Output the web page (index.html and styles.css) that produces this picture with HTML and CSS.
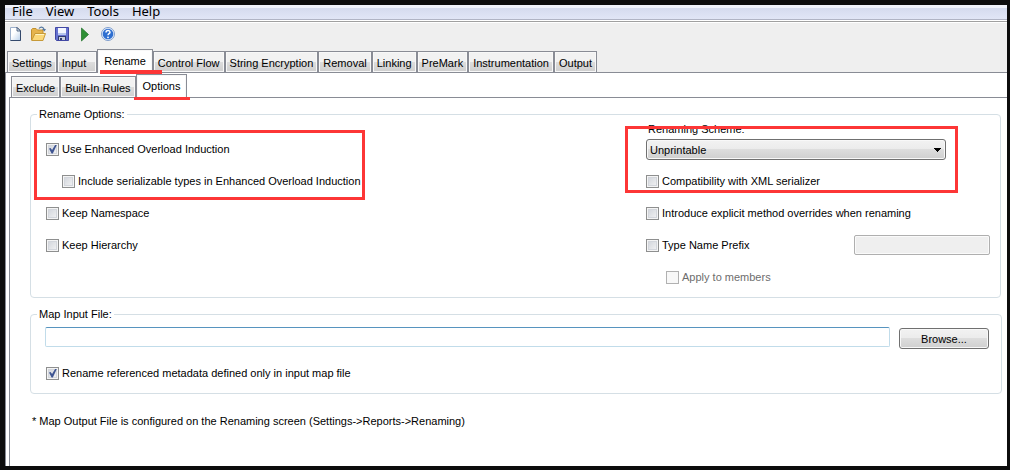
FILE: index.html
```html
<!DOCTYPE html>
<html lang="en">
<head>
  <meta charset="UTF-8">
  <meta name="viewport" content="width=device-width, initial-scale=1.0">
  <title>Rename Options</title>
  <link rel="stylesheet" href="styles.css">
</head>
<body>
  <div class="window">
    <nav class="menubar">
      <button type="button">File</button>
      <button type="button">View</button>
      <button type="button">Tools</button>
      <button type="button">Help</button>
    </nav>

    <div class="toolbar">
      <button type="button" aria-label="New">
        <svg viewBox="0 0 16 16">
          <defs>
            <linearGradient id="paper" x1="0" y1="0" x2="1" y2="1">
              <stop offset="0.4" stop-color="#fff"/><stop offset="1" stop-color="#b9d0ea"/>
            </linearGradient>
          </defs>
          <path d="M3.500 1.500H10L13.500 5V14.500H3.500Z" fill="url(#paper)" stroke="#9db0cb"/>
          <path d="M10 1.500L13.500 5V14.500H3.500" fill="none" stroke="#34496b"/>
          <path d="M10 1.500V5H13.500Z" fill="#dce8f5" stroke="#34496b" stroke-width=".8"/>
        </svg>
      </button>
      <button type="button" aria-label="Open">
        <svg viewBox="0 0 16 16">
          <path d="M1.500 14V3.500L2.500 2.500H6L7.500 4H13V7" fill="#e6b44c" stroke="#c1902f"/>
          <path d="M1.700 14.500L5 7.500H15.500L13 14.500Z" fill="#fbd878" stroke="#c79a38"/>
          <path d="M5.500 8.500H14" stroke="#fff4c2"/>
          <path d="M9 2.500C10.500.5 13 .5 14 3" fill="none" stroke="#56789f" stroke-width="1.200"/>
          <path d="M12 3H16L14.500 5.500Z" fill="#56789f"/>
        </svg>
      </button>
      <button type="button" aria-label="Save">
        <svg viewBox="0 0 16 16">
          <path d="M2.500 1.500H15.500V14.500H3.500L2.500 13.500Z" fill="#6672cf" stroke="#4148a4"/>
          <path d="M5 2H13V9H5Z" fill="#f4f7ff"/>
          <path d="M5 7H13V9H5Z" fill="#b8c7ee"/>
          <path d="M5 10H13V14H5Z" fill="#303c70"/>
          <path d="M6 11H12V14H6Z" fill="#cbd0dc"/>
          <path d="M7 12H9V14H7Z" fill="#303c70"/>
        </svg>
      </button>
      <button type="button" aria-label="Run">
        <svg viewBox="0 0 16 16">
          <path d="M5.500 2L12.500 8.500L5.500 15Z" fill="#2f8f35" stroke="#1c6f25" stroke-width=".7"/>
        </svg>
      </button>
      <button type="button" aria-label="Help">
        <svg viewBox="0 0 16 16">
          <circle cx="9" cy="8" r="6.500" fill="#e8f0fb" stroke="#7e9dcd"/>
          <circle cx="9" cy="8" r="5.300" fill="#2f6fd0"/>
          <path d="M7 6.500C7 3.800 11.200 3.900 11 6.400C10.900 7.700 9 7.700 9 9.300" fill="none" stroke="#fff" stroke-width="1.400"/>
          <circle cx="9" cy="11.300" r=".9" fill="#fff"/>
        </svg>
      </button>
    </div>

    <div class="tabs" role="tablist">
      <button type="button" class="tab" role="tab">Settings</button>
      <button type="button" class="tab tab-short" role="tab">Input</button>
      <button type="button" class="tab active marked marked-wide" role="tab" aria-selected="true">Rename</button>
      <button type="button" class="tab" role="tab">Control Flow</button>
      <button type="button" class="tab" role="tab">String Encryption</button>
      <button type="button" class="tab" role="tab">Removal</button>
      <button type="button" class="tab" role="tab">Linking</button>
      <button type="button" class="tab" role="tab">PreMark</button>
      <button type="button" class="tab" role="tab">Instrumentation</button>
      <button type="button" class="tab" role="tab">Output</button>
    </div>

    <div class="page">
      <div class="tabs" role="tablist">
        <button type="button" class="tab" role="tab">Exclude</button>
        <button type="button" class="tab" role="tab">Built-In Rules</button>
        <button type="button" class="tab active marked" role="tab" aria-selected="true">Options</button>
      </div>

      <form class="options">
        <fieldset>
          <legend>Rename Options:</legend>
          <div class="columns">
            <div class="left">
              <div class="highlight highlight-left">
                <label class="check"><input type="checkbox" checked> Use Enhanced Overload Induction</label>
                <label class="check indent"><input type="checkbox"> Include serializable types in Enhanced Overload Induction</label>
              </div>
              <label class="check"><input type="checkbox"> Keep Namespace</label>
              <label class="check"><input type="checkbox"> Keep Hierarchy</label>
            </div>
            <div class="right">
              <div class="highlight highlight-right">
                <label class="scheme-label" for="scheme">Renaming Scheme:</label>
                <select id="scheme" class="scheme">
                  <option selected>Unprintable</option>
                </select>
                <label class="check"><input type="checkbox"> Compatibility with XML serializer</label>
              </div>
              <label class="check"><input type="checkbox"> Introduce explicit method overrides when renaming</label>
              <div class="prefix">
                <label class="check"><input type="checkbox"> Type Name Prefix</label>
                <input type="text" class="textbox" aria-label="Type Name Prefix" disabled>
              </div>
              <label class="check indent disabled"><input type="checkbox" disabled> Apply to members</label>
            </div>
          </div>
        </fieldset>

        <fieldset class="map">
          <legend>Map Input File:</legend>
          <div class="file-row">
            <input type="text" class="textbox" aria-label="Map Input File">
            <button type="button" class="browse">Browse...</button>
          </div>
          <label class="check"><input type="checkbox" checked> Rename referenced metadata defined only in input map file</label>
        </fieldset>

        <p class="note">* Map Output File is configured on the Renaming screen (Settings-&gt;Reports-&gt;Renaming)</p>
      </form>
    </div>
  </div>
</body>
</html>
```
FILE: styles.css
```css
* {
  box-sizing: border-box;
}
body {
  margin: 0;
  padding: 5px 3px 4px 5px;
  min-height: 100vh;
  display: flex;
  background: #0d0d0d;
  color: #000;
  font: 11px/14px "Liberation Sans", Arial, sans-serif;
}
button,
input,
select {
  font: inherit;
  color: inherit;
  margin: 0;
}
.window {
  flex: 1;
  display: flex;
  flex-direction: column;
  background: #efefef;
}

/* menu and toolbar */
.menubar {
  display: flex;
  gap: 13px;
  height: 18px;
  padding-left: 7px;
  background: linear-gradient(#f0f2fa 0 3px, #d5dbee 3px, #e1e6f6 14px, #b0b4c4 14px 15px, #fff 15px 16px, #a0a0a0 16px 17px, #fff 17px);
}
.menubar button {
  padding: 0;
  border: 0;
  background: none;
  height: 12px;
  font: 13px/12px "Noto Sans", sans-serif;
}
.toolbar {
  display: flex;
  gap: 7px;
  height: 26px;
  padding: 3px 0 0 2px;
}
.toolbar button {
  width: 16px;
  height: 16px;
  padding: 0;
  border: 0;
  background: none;
}
.toolbar svg {
  display: block;
  width: 16px;
  height: 16px;
}

/* tabs */
.tabs {
  display: flex;
  align-items: flex-end;
  height: 24px;
  padding-left: 2px;
  border-bottom: 1px solid #898c95;
}
.tab {
  position: relative;
  height: 21px;
  padding: 2px 4px 0;
  border: 1px solid #898c95;
  border-bottom: 0;
  background: linear-gradient(#f2f2f2 50%, #dddddd 50%, #cfcfcf);
  box-shadow: inset 0 0 0 1px #f8f8f8;
  white-space: nowrap;
}
.tab-short {
  padding-right: 10px;
}
.tab.active {
  height: 24px;
  margin-bottom: -1px;
  padding: 0 6px 1px;
  background: #fff;
}
.marked::after {
  content: "";
  position: absolute;
  left: -3px;
  right: -4px;
  bottom: -2px;
  height: 3px;
  background: #fd3636;
  z-index: 1;
}
.marked-wide::after {
  left: 2px;
  right: -10px;
  bottom: -1px;
  height: 4px;
}
.page {
  flex: 1;
  display: flex;
  flex-direction: column;
  padding: 1px 0 0 3px;
  background: #fff;
  border-left: 1px solid #898c95;
}
.options {
  flex: 1;
  padding: 9px 5px 0 20px;
  border-left: 1px solid #898c95;
}

/* groups */
fieldset {
  min-width: 0;
  margin: 0 1px 9px 0;
  padding: 0 10px 4px 15px;
  border: 1px solid #d5dfe5;
  border-radius: 4px;
}
legend {
  margin-left: -9px;
  padding: 0 2px;
}
.columns {
  display: flex;
  justify-content: space-between;
}
.left {
  padding-top: 12px;
}
.right {
  width: 344px;
  padding-top: 2px;
}
.check {
  display: flex;
  align-items: center;
  gap: 3px;
  height: 32px;
  white-space: nowrap;
}
.left .indent {
  padding-left: 16px;
}
.right .indent {
  padding-left: 20px;
}
.disabled {
  color: #6d6d6d;
}
input[type="checkbox"] {
  appearance: none;
  position: relative;
  flex: none;
  width: 13px;
  height: 13px;
  border: 1px solid #8e8f8f;
  background: linear-gradient(135deg, #cdd1d8, #f6f6f6);
  box-shadow: inset 0 0 0 1px #f4f4f4, inset 0 0 0 2px #d3d6dc;
}
input[type="checkbox"]:checked::after {
  content: "";
  position: absolute;
  left: 2px;
  top: 1px;
  width: 8px;
  height: 9px;
  background: #3f5592;
  clip-path: polygon(0 45%, 20% 40%, 38% 62%, 80% 0, 100% 0, 48% 100%, 32% 100%);
}
input[type="checkbox"]:disabled {
  border-color: #b1b1b1;
  background: #f8f8f8;
  box-shadow: none;
}
.scheme-label {
  display: block;
  padding-left: 2px;
  line-height: 12px;
}
.scheme {
  appearance: none;
  display: block;
  width: 300px;
  height: 21px;
  margin: 4px 0 5px;
  padding: 0 3px;
  border: 1px solid #707070;
  border-radius: 3px;
  background:
    linear-gradient(#000, #000) right 4px top 8px / 7px 1px no-repeat,
    linear-gradient(#000, #000) right 5px top 9px / 5px 1px no-repeat,
    linear-gradient(#000, #000) right 6px top 10px / 3px 1px no-repeat,
    linear-gradient(#000, #000) right 7px top 11px / 1px 1px no-repeat,
    linear-gradient(#f2f2f2, #ebebeb 50%, #dddddd 50%, #cfcfcf);
  box-shadow: inset 0 0 0 1px #f8f8f8;
}
.prefix {
  display: flex;
  align-items: center;
  justify-content: space-between;
}
.textbox {
  height: 20px;
  padding: 0 3px;
  border: 1px solid #c1dcea;
  border-top-color: #5794bf;
  border-radius: 2px;
  background: #fff;
}
.textbox:disabled {
  width: 136px;
  border-color: #afafaf;
  background: #efefef;
  box-shadow: inset 0 0 0 1px #fafafa;
}

/* red frames around the important settings */
.highlight {
  position: relative;
}
.highlight::after {
  content: "";
  position: absolute;
  border: 3px solid #fd3636;
  pointer-events: none;
}
.highlight-left::after {
  inset: -3px -4px -3px -12px;
}
.highlight-right::after {
  inset: 3px 32px 4px -21px;
}

.map {
  margin-right: 0;
  padding: 6px 12px 4px 14px;
}
.map legend {
  margin-left: -8px;
}
.map .check {
  margin: 8px 0 0 1px;
}
.file-row {
  display: flex;
  gap: 9px;
}
.file-row .textbox {
  flex: 1;
}
.browse {
  width: 90px;
  height: 21px;
  margin-top: 1px;
  padding: 0;
  border: 1px solid #707070;
  border-radius: 3px;
  background: linear-gradient(#f2f2f2, #ebebeb 50%, #dddddd 50%, #cfcfcf);
  box-shadow: inset 0 0 0 1px #f8f8f8;
}
.note {
  margin: 20px 0 0 2px;
}
```
